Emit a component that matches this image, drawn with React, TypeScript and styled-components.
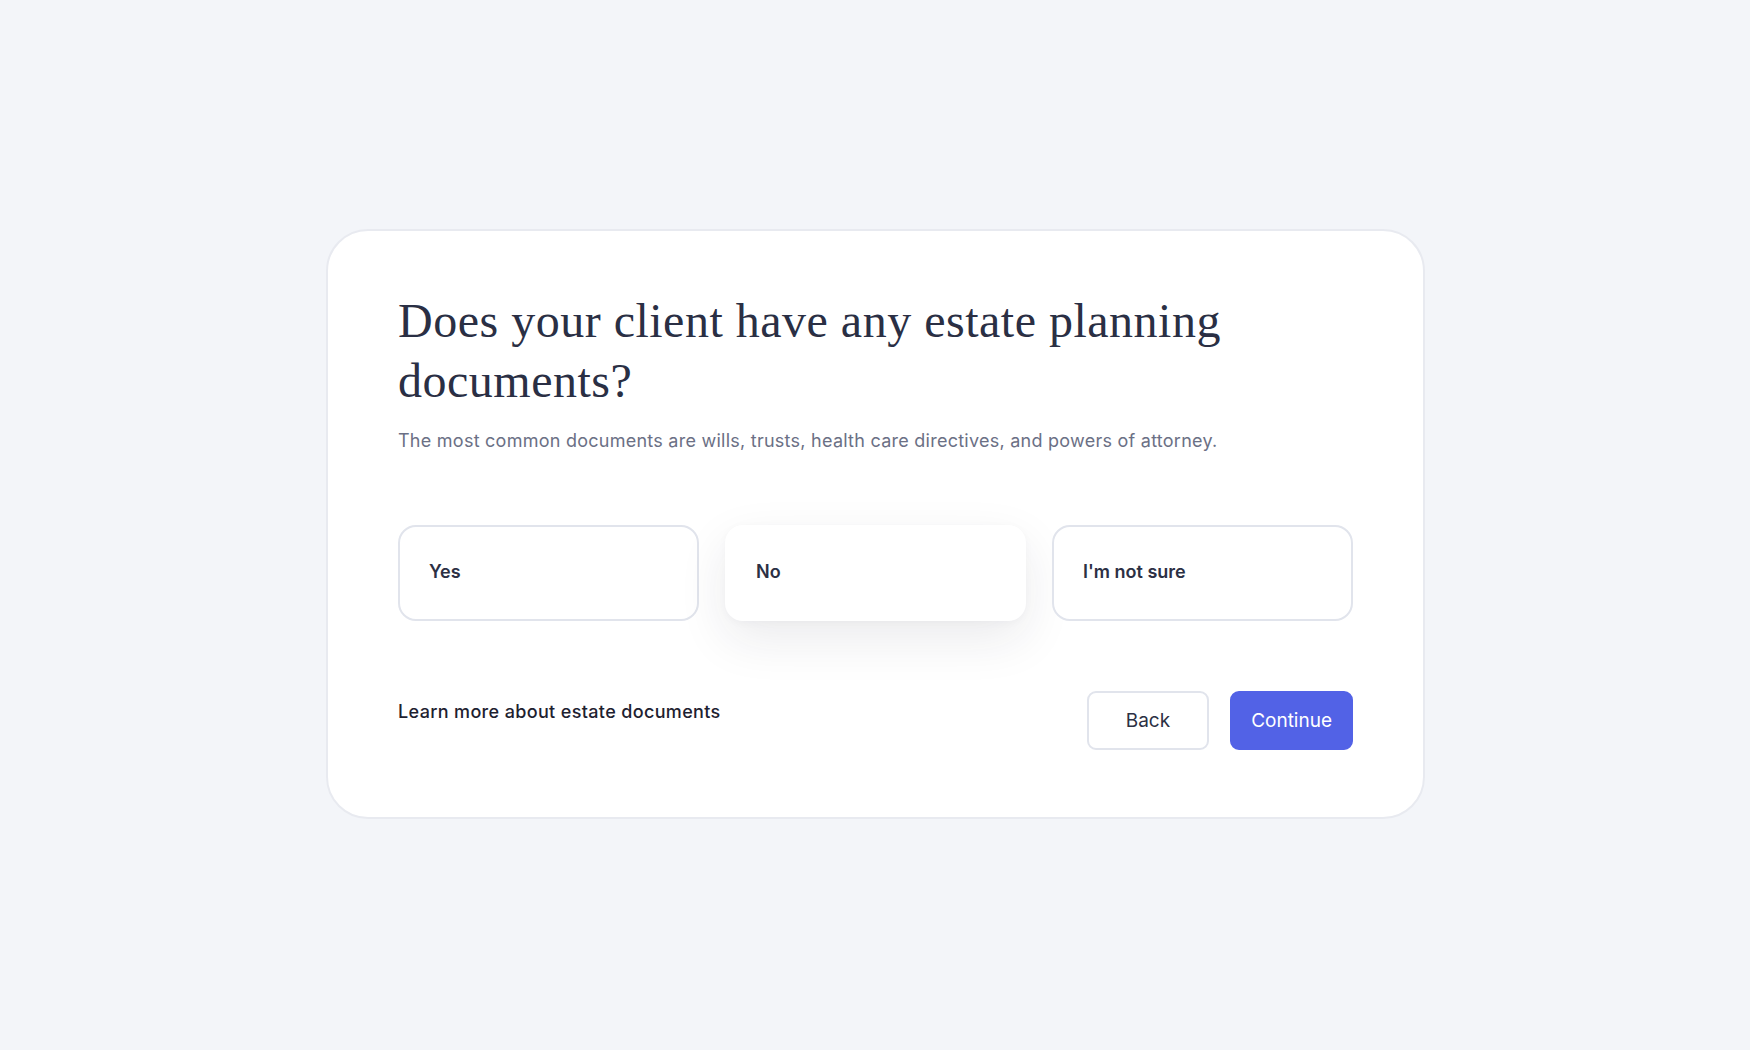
import React from "react";
import styled, { createGlobalStyle } from "styled-components";

const Global = createGlobalStyle`
  html, body { margin: 0; padding: 0; background: #f3f5f9; }
  body { font-family: Inter, "Noto Sans", sans-serif; -webkit-font-smoothing: antialiased; }
  * { box-sizing: border-box; }
`;

const Page = styled.div`
  width: 1750px;
  height: 1050px;
  background: #f3f5f9;
  padding-top: 229px;
  display: flex;
  justify-content: center;
`;

const Card = styled.div`
  width: 1099px;
  height: 590px;
  margin-left: 1px;
  background: #ffffff;
  border: 2px solid #e8eaf0;
  border-radius: 42px;
  padding: 60px 70px 66px 70px;
  display: flex;
  flex-direction: column;
`;

const Title = styled.h1`
  margin: 0;
  font-family: "Liberation Serif", "DejaVu Serif", serif;
  font-weight: 400;
  font-size: 48px;
  line-height: 60px;
  color: #2a2f44;
  letter-spacing: 0.5px;
  max-width: 880px;
`;

const Subtitle = styled.p`
  margin: 16px 0 0 0;
  font-size: 18px;
  line-height: 28px;
  color: #6b7085;
  letter-spacing: 0.25px;
`;

const Options = styled.div`
  margin-top: 70px;
  display: grid;
  grid-template-columns: repeat(3, 1fr);
  gap: 26px;
`;

const Option = styled.button<{ $active?: boolean }>`
  height: 96px;
  border-radius: 18px;
  background: #ffffff;
  border: 2px solid ${(p) => (p.$active ? "transparent" : "#e1e4ec")};
  box-shadow: ${(p) =>
    p.$active ? "0 18px 50px rgba(30, 35, 60, 0.09), 0 2px 8px rgba(30,35,60,0.03)" : "none"};
  display: flex;
  align-items: center;
  padding: 0 0 4px 29px;
  font-family: Inter, "Noto Sans", sans-serif;
  font-size: 18px;
  font-weight: 600;
  color: #2c3044;
  text-align: left;
  cursor: pointer;
`;

const Footer = styled.div`
  margin-top: 70px;
  display: flex;
  justify-content: space-between;
  align-items: flex-start;
`;

const LearnLink = styled.a`
  margin-top: 10px;
  font-size: 18px;
  font-weight: 500;
  color: #1e2130;
  text-decoration: none;
  letter-spacing: 0.35px;
  cursor: pointer;
`;

const Actions = styled.div`
  display: flex;
  gap: 21px;
`;

const Btn = styled.button<{ $primary?: boolean }>`
  height: 59px;
  padding: 0 ${(p) => (p.$primary ? 19 : 37)}px;
  border-radius: 9px;
  font-family: Inter, "Noto Sans", sans-serif;
  font-size: 19px;
  font-weight: 400;
  cursor: pointer;
  background: ${(p) => (p.$primary ? "#5262e6" : "#ffffff")};
  color: ${(p) => (p.$primary ? "#ffffff" : "#2c3044")};
  border: 2px solid ${(p) => (p.$primary ? "#5262e6" : "#e1e4ec")};
`;

export default function App() {
  return (
    <>
      <Global />
      <Page>
        <Card>
          <Title>Does your client have any estate planning documents?</Title>
          <Subtitle>
            The most common documents are wills, trusts, health care directives, and powers of attorney.
          </Subtitle>
          <Options>
            <Option>Yes</Option>
            <Option $active>No</Option>
            <Option>I'm not sure</Option>
          </Options>
          <Footer>
            <LearnLink>Learn more about estate documents</LearnLink>
            <Actions>
              <Btn>Back</Btn>
              <Btn $primary>Continue</Btn>
            </Actions>
          </Footer>
        </Card>
      </Page>
    </>
  );
}
